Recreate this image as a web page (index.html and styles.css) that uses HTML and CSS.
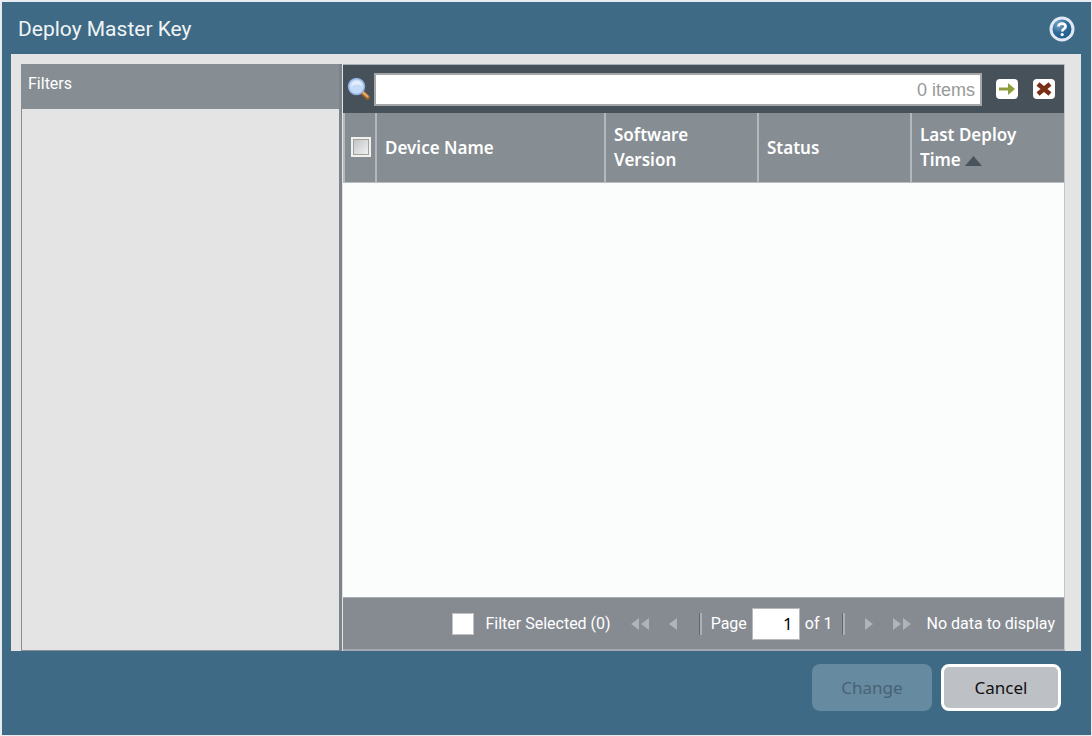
FILE: index.html
```html
<!DOCTYPE html>
<html lang="en">

<head>
    <meta charset="utf-8">
    <title>Deploy Master Key</title>
    <link rel="stylesheet" href="styles.css">
</head>

<body>

    <div class="dialog" role="dialog" aria-labelledby="dialogTitle">
        <header class="titlebar">
            <h2 id="dialogTitle">Deploy Master Key</h2>
            <button class="icon-btn" aria-label="Help">
                <svg width="26" height="26" viewBox="0 0 26 26">
                    <defs>
                        <radialGradient id="helpFill" cx="35%" cy="30%" r="75%">
                            <stop offset="0" stop-color="#7fa9c8" />
                            <stop offset="0.5" stop-color="#2f6b97" />
                            <stop offset="1" stop-color="#20598a" />
                        </radialGradient>
                    </defs>
                    <circle cx="13" cy="13" r="11" fill="url(#helpFill)" stroke="#dfe8f4" stroke-width="3" />
                    <path d="M9.5 10.5C9.5 6.5 16.8 6.7 16.6 10.6C16.5 12.9 13.2 12.8 13.2 15.4" fill="none" stroke="#fff" stroke-width="2.6" />
                    <circle cx="13.2" cy="18.6" r="1.6" fill="#fff" />
                </svg>
            </button>
        </header>

        <main class="content">
            <section class="filters">
                <h3>Filters</h3>
            </section>

            <section class="devices">
                <div class="search">
                    <label for="search" aria-label="Search">
                        <svg width="24" height="24" viewBox="0 0 24 24">
                            <path d="M16 16L20.500 20.500" stroke="#8f5f2c" stroke-width="5" stroke-linecap="round" />
                            <path d="M16 15.500L20.500 19.500" stroke="#e2a868" stroke-width="2.500" stroke-linecap="round" />
                            <circle cx="9.500" cy="9.500" r="8" fill="#c3dbf6" stroke="#8fb0e2" stroke-width="1.500" />
                            <path d="M4 10C4 2 15 2 15 9C12 7 7 7 4 10Z" fill="#e3effc" />
                        </svg>
                    </label>
                    <div class="search-box">
                        <input id="search" type="text">
                        <span>0 items</span>
                    </div>
                    <button class="icon-btn" aria-label="Apply filter">
                        <svg width="24" height="24" viewBox="0 0 24 24">
                            <rect x="1" y="2" width="22" height="20" rx="4" fill="#fff" />
                            <path d="M4 12H15" stroke="#8f9e3a" stroke-width="3" />
                            <path d="M13 6L20 12L13 18Z" fill="#8f9e3a" />
                        </svg>
                    </button>
                    <button class="icon-btn" aria-label="Clear filter">
                        <svg width="24" height="24" viewBox="0 0 24 24">
                            <rect x="1" y="2" width="22" height="20" rx="4" fill="#fff" />
                            <path d="M6 7L18 17M18 7L6 17" stroke="#7a2e16" stroke-width="4.500" />
                        </svg>
                    </button>
                </div>

                <table>
                    <colgroup>
                        <col class="col-check">
                        <col>
                        <col class="col-narrow">
                        <col class="col-narrow">
                        <col class="col-narrow">
                    </colgroup>
                    <thead>
                        <tr>
                            <th class="check-cell"><input type="checkbox" class="check-all" aria-label="Select all"></th>
                            <th>Device Name</th>
                            <th>Software Version</th>
                            <th>Status</th>
                            <th>Last Deploy Time <svg width="17" height="10" viewBox="0 0 17 10"><path d="M0 10L8.500 0L17 10Z" fill="#49535c" /></svg></th>
                        </tr>
                    </thead>
                    <tbody></tbody>
                </table>

                <div class="pager">
                    <input type="checkbox" id="filterSelected" class="check-filter">
                    <label for="filterSelected" class="filter-label">Filter Selected (0)</label>
                    <button class="icon-btn" aria-label="First page" disabled>
                        <svg width="18" height="12" viewBox="0 0 18 12"><path d="M8 0V12L0 6ZM18 0V12L10 6Z" /></svg>
                    </button>
                    <button class="icon-btn prev" aria-label="Previous page" disabled>
                        <svg width="8" height="12" viewBox="0 0 8 12"><path d="M8 0V12L0 6Z" /></svg>
                    </button>
                    <span class="separator"></span>
                    <label for="page">Page</label>
                    <input type="text" id="page" value="1">
                    <span>of 1</span>
                    <span class="separator"></span>
                    <button class="icon-btn next" aria-label="Next page" disabled>
                        <svg width="8" height="12" viewBox="0 0 8 12"><path d="M0 0V12L8 6Z" /></svg>
                    </button>
                    <button class="icon-btn last" aria-label="Last page" disabled>
                        <svg width="18" height="12" viewBox="0 0 18 12"><path d="M0 0V12L8 6ZM10 0V12L18 6Z" /></svg>
                    </button>
                    <span>No data to display</span>
                </div>
            </section>
        </main>

        <footer class="actions">
            <button class="btn" disabled>Change</button>
            <button class="btn btn-cancel">Cancel</button>
        </footer>
    </div>

</body>

</html>
```
FILE: styles.css
```css
* {
    box-sizing: border-box;
}

body {
    margin: 0;
    padding: 2px 1px 1px 2px;
    background-color: #e8ecf0;
    font-family: Roboto, 'Liberation Sans', sans-serif;
    font-size: 16px;
}

.dialog {
    display: flex;
    flex-direction: column;
    min-height: calc(100vh - 3px);
    padding: 0 10px 0 9px;
    background-color: #3f6a85;
}

.titlebar {
    display: flex;
    align-items: center;
    justify-content: space-between;
    height: 52px;
    padding: 2px 6px 0 7px;
    color: #f0f4f6;
}

h2,
h3 {
    margin: 0;
    font-weight: normal;
}

h2 {
    font-size: 21px;
}

h3 {
    height: 45px;
    padding: 8px 6px;
    background-color: #868d93;
    color: #fff;
    font-size: 16px;
    line-height: 24px;
}

.icon-btn {
    display: flex;
    padding: 0;
    border: none;
    background: none;
}

/* Body of the dialog */
.content {
    display: flex;
    flex: 1;
    gap: 1px;
    padding: 10px 16px 0 10px;
    background-color: #e4e4e4;
}

.filters {
    flex: 0 1 321px;
    border: 1px solid #868d93;
    border-top: none;
    border-right: 3px solid #7c848b;
}

.devices {
    display: flex;
    flex: 1;
    flex-direction: column;
    border-top: 1px solid #a9aeb3;
    border-right: 1px solid #c2c5c9;
    border-bottom: 2px solid #a3a6ae;
    background-color: #fbfdfc;
}

/* Search bar */
.search {
    display: flex;
    align-items: center;
    gap: 13px;
    height: 48px;
    padding: 0 8px 0 4px;
    background-color: #475159;
}

.search label {
    display: flex;
    margin-right: -10px;
}

.search-box {
    display: flex;
    flex: 1;
    align-items: center;
    height: 33px;
    padding: 2px 5px 0 0;
    border: 2px solid #a5a6a7;
    background-color: #fff;
    color: #999;
    font-family: 'Liberation Sans', sans-serif;
    font-size: 18px;
}

.search-box input {
    flex: 1;
    min-width: 0;
    border: none;
    outline: none;
    background: none;
    font: inherit;
}

/* Device table */
table {
    width: 100%;
    table-layout: fixed;
    border-collapse: collapse;
}

.col-check {
    width: 32px;
}

.col-narrow {
    width: 153px;
}

th {
    height: 69px;
    padding: 0 8px;
    border-bottom: 1px solid #b9bdc2;
    border-left: 2px solid #b4b7bc;
    background-color: #868d93;
    color: #fff;
    font-family: 'Noto Sans', sans-serif;
    font-size: 17px;
    font-weight: 600;
    line-height: 25px;
    text-align: left;
}

.check-cell {
    padding: 0 6px;
}

.check-all,
.check-filter {
    display: block;
    width: 20px;
    height: 20px;
    margin: 0;
    appearance: none;
    background-color: #fff;
}

.check-all {
    border: 2px solid #f1f1f0;
    outline: 1px solid #a2a19c;
    outline-offset: -3px;
    background-image: linear-gradient(135deg, #bfc1c5, #f4f4f4);
}

/* Pager */
.pager {
    display: flex;
    align-items: center;
    justify-content: flex-end;
    height: 52px;
    margin-top: auto;
    padding-right: 9px;
    border-top: 1px solid #a9adb2;
    background-color: #868b92;
    color: #fff;
}

.check-filter {
    width: 22px;
    height: 22px;
    border: 1px solid #c0c3c7;
}

.filter-label {
    margin: 0 20px 0 11px;
}

.pager svg {
    fill: #b0b3b7;
}

.prev {
    margin: 0 22px 0 20px;
}

.next {
    margin: 0 20px;
}

.last {
    margin-right: 15px;
}

.separator {
    width: 3px;
    height: 22px;
    border-left: 1px solid #61666c;
    border-right: 2px solid #a9b0b7;
}

.separator + label {
    margin-left: 9px;
}

#page {
    width: 48px;
    height: 32px;
    margin: 0 5px;
    padding: 0 6px;
    border: 1px solid #b5b8bc;
    background-color: #fff;
    color: #000;
    font-family: 'Noto Sans', sans-serif;
    font-size: 17px;
    text-align: right;
}

#page + span {
    margin-right: 10px;
}

/* Dialog buttons */
.actions {
    display: flex;
    justify-content: flex-end;
    gap: 9px;
    padding: 13px 20px 24px;
}

.btn {
    width: 120px;
    height: 47px;
    border: none;
    border-radius: 8px;
    background-color: #668aa0;
    color: #486375;
    font-family: 'Noto Sans', sans-serif;
    font-size: 17px;
}

.btn-cancel {
    border: 3px solid #fff;
    background-color: #bdc0c5;
    color: #111;
}
```
